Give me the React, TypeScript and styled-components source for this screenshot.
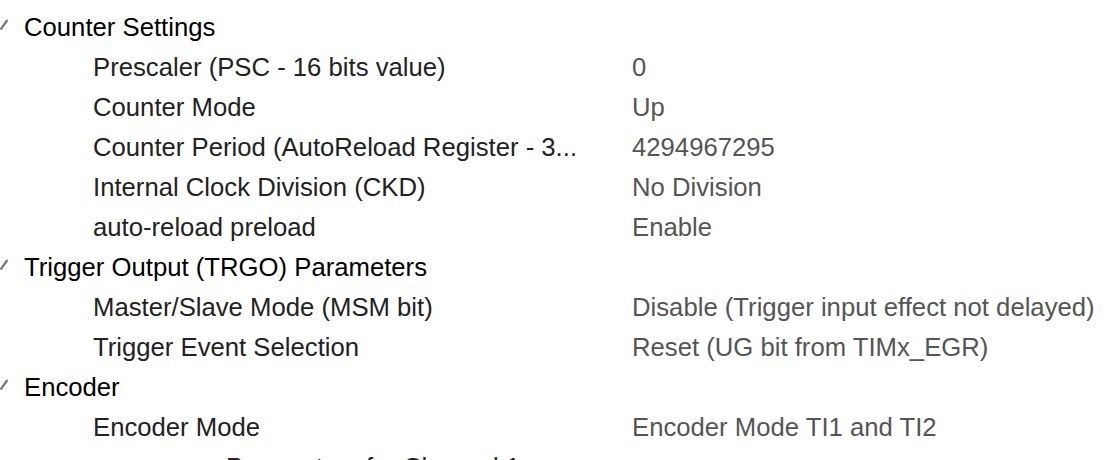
import React from "react";
import styled, { createGlobalStyle } from "styled-components";

const Global = createGlobalStyle`
  html, body {
    margin: 0;
    padding: 0;
    background: #ffffff;
    overflow: hidden;
  }
  body {
    font-family: "Liberation Sans", Arial, sans-serif;
  }
`;

const Tree = styled.div`
  width: 1116px;
  height: 460px;
  overflow: hidden;
  padding-top: 7px;
  box-sizing: border-box;
  font-size: 25.7px;
  line-height: 40px;
`;

const HeadingRow = styled.div<{ $indent?: number }>`
  display: flex;
  align-items: stretch;
  height: 40px;
  padding-left: ${(p) => p.$indent ?? 0}px;
  color: #000000;
  white-space: nowrap;
`;

const Twisty = styled.svg`
  flex: 0 0 24px;
  width: 24px;
  height: 40px;
`;

const PropRow = styled.div`
  display: grid;
  grid-template-columns: 539px 1fr;
  height: 40px;
  padding-left: 93px;
  white-space: nowrap;
`;

const Label = styled.span`
  color: #222222;
  overflow: hidden;
`;

const Value = styled.span`
  color: #555555;
`;

const SubHeading = styled.div`
  height: 40px;
  padding-left: 226px;
  color: #222222;
  white-space: nowrap;
`;

type Section = { title: string; props: [string, string][] };

const sections: Section[] = [
  {
    title: "Counter Settings",
    props: [
      ["Prescaler (PSC - 16 bits value)", "0"],
      ["Counter Mode", "Up"],
      ["Counter Period (AutoReload Register - 3...", "4294967295"],
      ["Internal Clock Division (CKD)", "No Division"],
      ["auto-reload preload", "Enable"],
    ],
  },
  {
    title: "Trigger Output (TRGO) Parameters",
    props: [
      ["Master/Slave Mode (MSM bit)", "Disable (Trigger input effect not delayed)"],
      ["Trigger Event Selection", "Reset (UG bit from TIMx_EGR)"],
    ],
  },
  {
    title: "Encoder",
    props: [["Encoder Mode", "Encoder Mode TI1 and TI2"]],
  },
];

const ExpandIcon = () => (
  <Twisty viewBox="0 0 24 40">
    <line x1="0.5" y1="22.5" x2="7.5" y2="13" stroke="#7a7a7a" strokeWidth="2.2" strokeLinecap="butt" />
  </Twisty>
);

export default function App() {
  return (
    <>
      <Global />
      <Tree>
        {sections.map((s) => (
          <React.Fragment key={s.title}>
            <HeadingRow>
              <ExpandIcon />
              <span>{s.title}</span>
            </HeadingRow>
            {s.props.map(([l, v]) => (
              <PropRow key={l}>
                <Label>{l}</Label>
                <Value>{v}</Value>
              </PropRow>
            ))}
          </React.Fragment>
        ))}
        <SubHeading>Parameters for Channel 1</SubHeading>
      </Tree>
    </>
  );
}
